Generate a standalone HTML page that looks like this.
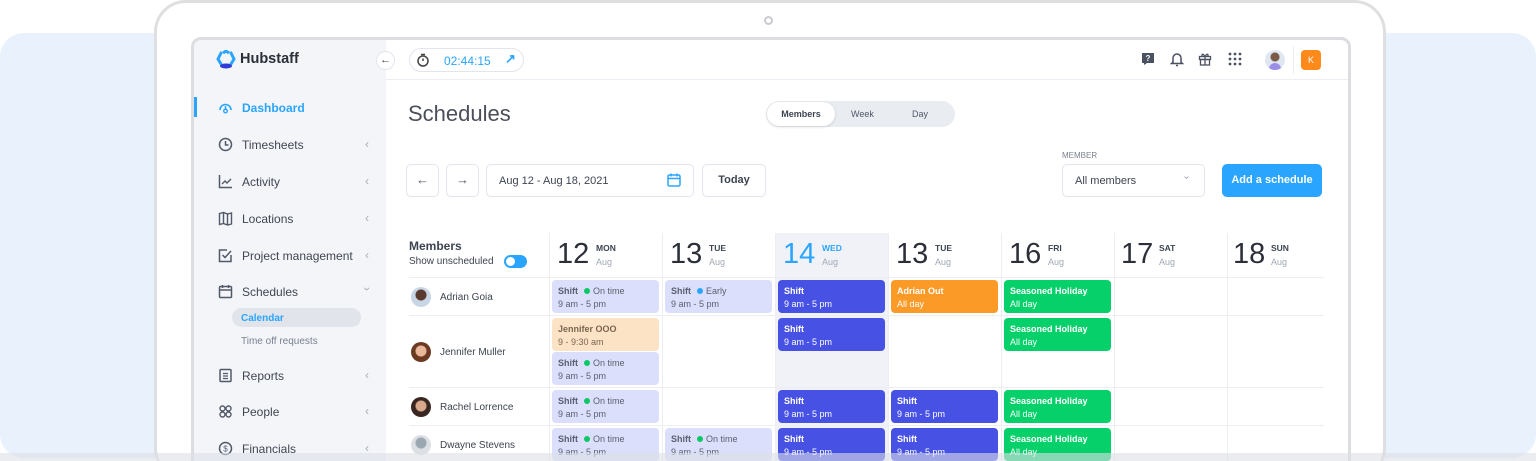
<!DOCTYPE html>
<html><head><meta charset="utf-8">
<style>
*{box-sizing:border-box;margin:0;padding:0}
html,body{width:1536px;height:461px;overflow:hidden;background:#fff}
body{font-family:"Liberation Sans",sans-serif;color:#3d4451}
#w{position:relative;width:1536px;height:461px;overflow:hidden}
.a{position:absolute;white-space:nowrap}
.nav{position:absolute;left:218px;font-size:12px;color:#404652;display:flex;align-items:center;gap:9px;white-space:nowrap}
.nav svg{width:15px;height:15px}
.chev{position:absolute;left:365px;color:#a4abb7;font-size:12px}
.col{position:absolute;top:233px;width:113px;height:240px;border-left:1px solid #eceef3}
.dn{position:absolute;top:238px;font-size:29px;color:#2b2f38}
.dd{position:absolute;top:243px;font-size:8.5px;font-weight:bold;color:#3d4451}
.dm{position:absolute;top:257px;font-size:9px;color:#a1a8b5}
.ev{position:absolute;width:107px;height:33px;border-radius:4px;padding:5px 6px;font-size:9px;line-height:13px;white-space:nowrap;overflow:hidden}
.ev b{font-weight:bold}
.lv{background:#dcdffb;color:#5a6070}
.bl{background:#4752e4;color:#fff}
.or{background:#fc9a27;color:#fff}
.gr{background:#05d06a;color:#fff}
.pe{background:#fde3c6;color:#7a6552}
.dot{display:inline-block;width:6px;height:6px;border-radius:50%;margin:0 3px 0 6px;vertical-align:0}
.hl{position:absolute;left:409px;height:1px;width:915px;background:#eceef3}
.mem{position:absolute;left:411px;font-size:10px;color:#3d4451;display:flex;align-items:center;gap:9px;white-space:nowrap}
.av{width:20px;height:20px;border-radius:50%}
.btn{position:absolute;border:1px solid #e1e5ee;border-radius:5px;background:#fff;white-space:nowrap}
</style></head><body><div id="w">
<div class="a" style="left:0;top:33px;width:1536px;height:425px;background:#e8f1fc;border-radius:24px"></div>
<div class="a" style="left:154px;top:0;width:1232px;height:480px;background:#fff;border:3px solid #dedfe1;border-radius:32px"></div>
<div class="a" style="left:764px;top:16px;width:9px;height:9px;border-radius:50%;border:2px solid #c9cbcf"></div>
<div class="a" style="left:191px;top:37px;width:1160px;height:440px;background:#fff;border:3px solid #dcdde0;border-radius:10px;overflow:hidden">
 <div class="a" style="left:0;top:0;width:192px;height:440px;background:#f3f5f9"></div>
 <div class="a" style="left:192px;top:39px;width:970px;height:1px;background:#eceef3"></div>
</div>
<svg class="a" style="left:216px;top:50px" width="20" height="19" viewBox="0 0 20 19"><path d="M5 3 L2 9 L5 14" stroke="#2aa5ff" stroke-width="3" fill="none" stroke-linecap="round"/><path d="M15 3 L18 9 L15 14" stroke="#2aa5ff" stroke-width="3" fill="none" stroke-linecap="round"/><path d="M7 3 L10 1 L13 3" stroke="#2aa5ff" stroke-width="3" fill="none"/><ellipse cx="10" cy="16" rx="6" ry="2.5" fill="#2f3bd8"/></svg>
<div class="a" style="left:240px;top:51px;font-size:14.5px;font-weight:bold;color:#2b2f38">Hubstaff</div>
<div class="a" style="left:376px;top:51px;width:19px;height:19px;border-radius:50%;background:#fff;border:1px solid #e1e5ee;font-size:11px;text-align:center;line-height:17px;color:#444">&#8592;</div>
<div class="a" style="left:409px;top:48px;width:115px;height:24px;border-radius:12px;border:1px solid #e1e5ee;background:#fff"></div>
<svg class="a" style="left:416px;top:53px" width="14" height="14" viewBox="0 0 14 14"><circle cx="7" cy="8" r="5" stroke="#444" stroke-width="1.5" fill="none"/><path d="M5 1.5h4M7 8V5.5" stroke="#444" stroke-width="1.5"/></svg>
<div class="a" style="left:444px;top:54px;font-size:12px;color:#2aa5ff">02:44:15</div>
<div class="a" style="left:505px;top:51px;font-size:13px;color:#2aa5ff;font-weight:bold">&#8599;</div>
<svg class="a" style="left:1141px;top:52px" width="14" height="14" viewBox="0 0 14 14"><path d="M1 1h12v10H6l-3 2v-2H1z" fill="#4a5161"/><text x="7" y="9" font-size="8" fill="#fff" text-anchor="middle" font-family="Liberation Sans" font-weight="bold">?</text></svg>
<svg class="a" style="left:1170px;top:52px" width="14" height="15" viewBox="0 0 14 15"><path d="M3 10V6a4 4 0 0 1 8 0v4l1.5 1.5h-11z" stroke="#4a5161" stroke-width="1.5" fill="none"/><path d="M6 13.5h2" stroke="#4a5161" stroke-width="1.5"/></svg>
<svg class="a" style="left:1198px;top:52px" width="14" height="14" viewBox="0 0 14 14"><rect x="1.5" y="4.5" width="11" height="3" stroke="#4a5161" stroke-width="1.3" fill="none"/><rect x="2.5" y="7.5" width="9" height="5.5" stroke="#4a5161" stroke-width="1.3" fill="none"/><path d="M7 4.5v8.5M7 4.5C5 1 3 2 4.5 4.5M7 4.5C9 1 11 2 9.5 4.5" stroke="#4a5161" stroke-width="1.3" fill="none"/></svg>
<svg class="a" style="left:1228px;top:52px" width="14" height="14" viewBox="0 0 14 14" fill="#4a5161"><circle cx="2" cy="2" r="1.4"/><circle cx="7" cy="2" r="1.4"/><circle cx="12" cy="2" r="1.4"/><circle cx="2" cy="7" r="1.4"/><circle cx="7" cy="7" r="1.4"/><circle cx="12" cy="7" r="1.4"/><circle cx="2" cy="12" r="1.4"/><circle cx="7" cy="12" r="1.4"/><circle cx="12" cy="12" r="1.4"/></svg>
<div class="a" style="left:1265px;top:50px;width:20px;height:20px;border-radius:50%;background:radial-gradient(circle at 50% 35%,#7a5a48 0 4px,#dfe8f2 5px);overflow:hidden"><div style="position:absolute;left:4px;top:13px;width:12px;height:8px;border-radius:6px 6px 0 0;background:#9b8ee8"></div></div>
<div class="a" style="left:1293px;top:46px;width:1px;height:28px;background:#eceef3"></div>
<div class="a" style="left:1301px;top:50px;width:20px;height:20px;border-radius:4px;background:#fd8a1a;color:#fff;font-size:9px;text-align:center;line-height:20px">K</div>

<div class="a" style="left:194px;top:97px;width:3px;height:20px;background:#2aa5ff"></div>
<div class="nav" style="top:100px;color:#2aa5ff;font-weight:bold"><svg viewBox="0 0 15 15"><path d="M2 10a5.5 5.5 0 0 1 11 0" stroke="#2aa5ff" stroke-width="1.6" fill="none"/><circle cx="7.5" cy="11" r="1.8" stroke="#2aa5ff" stroke-width="1.4" fill="none"/><path d="M7.5 9V6" stroke="#2aa5ff" stroke-width="1.5"/></svg>Dashboard</div>
<div class="nav" style="top:137px"><svg viewBox="0 0 15 15"><circle cx="7.5" cy="7.5" r="6" stroke="#525a69" stroke-width="1.5" fill="none"/><path d="M7.5 4v4h3" stroke="#525a69" stroke-width="1.5" fill="none"/></svg>Timesheets</div><div class="chev" style="top:137px">&#8249;</div>
<div class="nav" style="top:174px"><svg viewBox="0 0 15 15"><path d="M1.5 1v12.5H14" stroke="#525a69" stroke-width="1.5" fill="none"/><path d="M4 10l3-3 2 2 4-4" stroke="#525a69" stroke-width="1.4" fill="none"/></svg>Activity</div><div class="chev" style="top:174px">&#8249;</div>
<div class="nav" style="top:211px"><svg viewBox="0 0 15 15"><path d="M1.5 2.5l4-1 4 1.5 4-1v11l-4 1-4-1.5-4 1z M5.5 1.5v11 M9.5 3v11" stroke="#525a69" stroke-width="1.4" fill="none"/></svg>Locations</div><div class="chev" style="top:211px">&#8249;</div>
<div class="nav" style="top:248px"><svg viewBox="0 0 15 15"><path d="M13 7v6.5H1.5V2H9" stroke="#525a69" stroke-width="1.5" fill="none"/><path d="M4.5 7l2.5 2.5 6-6.5" stroke="#525a69" stroke-width="1.5" fill="none"/></svg>Project management</div><div class="chev" style="top:248px">&#8249;</div>
<div class="nav" style="top:284px"><svg viewBox="0 0 15 15"><rect x="1.5" y="2.5" width="12" height="11" rx="1" stroke="#525a69" stroke-width="1.5" fill="none"/><path d="M1.5 6h12M4.5 1v3M10.5 1v3" stroke="#525a69" stroke-width="1.5"/></svg>Schedules</div><div class="chev" style="top:282px;left:364px;transform:rotate(-90deg)">&#8249;</div>
<div class="a" style="left:232px;top:308px;width:129px;height:19px;border-radius:10px;background:#e1e4ea"></div>
<div class="a" style="left:241px;top:313px;font-size:10px;color:#2aa5ff;font-weight:bold">Calendar</div>
<div class="a" style="left:241px;top:336px;font-size:10px;color:#7a818f">Time off requests</div>
<div class="nav" style="top:368px"><svg viewBox="0 0 15 15"><rect x="2" y="1.5" width="11" height="12" rx="1" stroke="#525a69" stroke-width="1.5" fill="none"/><path d="M5 5.5h5M5 8h5M5 10.5h5" stroke="#525a69" stroke-width="1.3"/></svg>Reports</div><div class="chev" style="top:368px">&#8249;</div>
<div class="nav" style="top:404px"><svg viewBox="0 0 15 15"><circle cx="4.5" cy="4.5" r="2.5" stroke="#525a69" stroke-width="1.4" fill="none"/><circle cx="10.5" cy="4.5" r="2.5" stroke="#525a69" stroke-width="1.4" fill="none"/><circle cx="4.5" cy="10.5" r="2.5" stroke="#525a69" stroke-width="1.4" fill="none"/><circle cx="10.5" cy="10.5" r="2.5" stroke="#525a69" stroke-width="1.4" fill="none"/></svg>People</div><div class="chev" style="top:404px">&#8249;</div>
<div class="nav" style="top:441px"><svg viewBox="0 0 15 15"><circle cx="7.5" cy="7.5" r="6" stroke="#525a69" stroke-width="1.5" fill="none"/><text x="7.5" y="10.5" font-size="8" fill="#525a69" text-anchor="middle" font-family="Liberation Sans">$</text></svg>Financials</div><div class="chev" style="top:441px">&#8249;</div>

<div class="a" style="left:408px;top:101px;font-size:22px;color:#4a4f5a">Schedules</div>
<div class="a" style="left:766px;top:101px;width:189px;height:26px;border-radius:13px;background:#e9ecf1"></div>
<div class="a" style="left:767px;top:102px;width:68px;height:24px;border-radius:12px;background:#fff;box-shadow:0 1px 3px rgba(0,0,0,.12);font-size:9px;font-weight:bold;text-align:center;line-height:24px;color:#3d4451">Members</div>
<div class="a" style="left:851px;top:109px;font-size:9px;color:#50576a">Week</div>
<div class="a" style="left:912px;top:109px;font-size:9px;color:#50576a">Day</div>

<div class="btn" style="left:406px;top:164px;width:33px;height:33px"></div><div class="a" style="left:416px;top:172px;font-size:13px;color:#525a69">&#8592;</div>
<div class="btn" style="left:446px;top:164px;width:33px;height:33px"></div><div class="a" style="left:456px;top:172px;font-size:13px;color:#525a69">&#8594;</div>
<div class="btn" style="left:486px;top:164px;width:208px;height:33px"></div>
<div class="a" style="left:499px;top:175px;font-size:11px;color:#3d4451">Aug 12 - Aug 18, 2021</div>
<svg class="a" style="left:667px;top:173px" width="14" height="14" viewBox="0 0 14 14"><rect x="1" y="2" width="12" height="11" rx="1.5" stroke="#2aa5ff" stroke-width="1.5" fill="none"/><path d="M1 5.5h12M4 0.5v3M10 0.5v3" stroke="#2aa5ff" stroke-width="1.5"/></svg>
<div class="btn" style="left:702px;top:164px;width:64px;height:33px;font-size:11px;font-weight:bold;text-align:center;line-height:31px;color:#3d4451">Today</div>
<div class="a" style="left:1062px;top:151px;font-size:8px;color:#7a818f">MEMBER</div>
<div class="btn" style="left:1062px;top:164px;width:143px;height:33px"></div>
<div class="a" style="left:1075px;top:175px;font-size:11px;color:#3d4451">All members</div>
<div class="a" style="left:1185px;top:172px;font-size:10px;color:#8a91a0;transform:rotate(-90deg)">&#8249;</div>
<div class="a" style="left:1222px;top:164px;width:100px;height:33px;border-radius:5px;background:#2aa5ff;color:#fff;font-size:11px;font-weight:bold;text-align:center;line-height:33px">Add a schedule</div>

<div class="a" style="left:776px;top:233px;width:112px;height:240px;background:#f0f2f7"></div>
<div class="col" style="left:549px"></div><div class="col" style="left:662px"></div><div class="col" style="left:775px"></div><div class="col" style="left:888px"></div><div class="col" style="left:1001px"></div><div class="col" style="left:1114px"></div><div class="col" style="left:1227px"></div>
<div class="hl" style="top:277px"></div><div class="hl" style="top:315px"></div><div class="hl" style="top:387px"></div><div class="hl" style="top:425px"></div>

<div class="a" style="left:409px;top:239px;font-size:12px;font-weight:bold;color:#3d4451">Members</div>
<div class="a" style="left:409px;top:256px;font-size:10px;color:#3d4451">Show unscheduled</div>
<div class="a" style="left:504px;top:255px;width:23px;height:13px;border-radius:7px;background:#2aa5ff"><div style="position:absolute;left:2px;top:2px;width:9px;height:9px;border-radius:50%;background:#fff"></div></div>

<div class="dn" style="left:557px">12</div><div class="dd" style="left:596px">MON</div><div class="dm" style="left:596px">Aug</div>
<div class="dn" style="left:670px">13</div><div class="dd" style="left:709px">TUE</div><div class="dm" style="left:709px">Aug</div>
<div class="dn" style="left:783px;color:#2aa5ff">14</div><div class="dd" style="left:822px;color:#2aa5ff">WED</div><div class="dm" style="left:822px">Aug</div>
<div class="dn" style="left:896px">13</div><div class="dd" style="left:935px">TUE</div><div class="dm" style="left:935px">Aug</div>
<div class="dn" style="left:1009px">16</div><div class="dd" style="left:1048px">FRI</div><div class="dm" style="left:1048px">Aug</div>
<div class="dn" style="left:1121px">17</div><div class="dd" style="left:1159px">SAT</div><div class="dm" style="left:1159px">Aug</div>
<div class="dn" style="left:1233px">18</div><div class="dd" style="left:1271px">SUN</div><div class="dm" style="left:1271px">Aug</div>

<div class="mem" style="top:287px"><div class="av" style="background:radial-gradient(circle at 50% 40%,#5a3a2c 0 5px,#c9d6e6 6px)"></div>Adrian Goia</div>
<div class="mem" style="top:342px"><div class="av" style="background:radial-gradient(circle at 50% 45%,#e9b89a 0 5px,#6b3a22 6px)"></div>Jennifer Muller</div>
<div class="mem" style="top:397px"><div class="av" style="background:radial-gradient(circle at 50% 45%,#d9a98c 0 5px,#3a2620 6px)"></div>Rachel Lorrence</div>
<div class="mem" style="top:435px"><div class="av" style="background:radial-gradient(circle at 50% 40%,#9aa6b0 0 5px,#dcdfe3 6px)"></div>Dwayne Stevens</div>

<div class="ev lv" style="left:552px;top:280px"><b>Shift</b><span class="dot" style="background:#0bc866"></span>On time<br>9 am - 5 pm</div>
<div class="ev lv" style="left:665px;top:280px"><b>Shift</b><span class="dot" style="background:#2aa5ff"></span>Early<br>9 am - 5 pm</div>
<div class="ev bl" style="left:778px;top:280px"><b>Shift</b><br>9 am - 5 pm</div>
<div class="ev or" style="left:891px;top:280px"><b>Adrian Out</b><br>All day</div>
<div class="ev gr" style="left:1004px;top:280px"><b>Seasoned Holiday</b><br>All day</div>

<div class="ev pe" style="left:552px;top:318px"><b>Jennifer OOO</b><br>9 - 9:30 am</div>
<div class="ev lv" style="left:552px;top:352px"><b>Shift</b><span class="dot" style="background:#0bc866"></span>On time<br>9 am - 5 pm</div>
<div class="ev bl" style="left:778px;top:318px"><b>Shift</b><br>9 am - 5 pm</div>
<div class="ev gr" style="left:1004px;top:318px"><b>Seasoned Holiday</b><br>All day</div>

<div class="ev lv" style="left:552px;top:390px"><b>Shift</b><span class="dot" style="background:#0bc866"></span>On time<br>9 am - 5 pm</div>
<div class="ev bl" style="left:778px;top:390px"><b>Shift</b><br>9 am - 5 pm</div>
<div class="ev bl" style="left:891px;top:390px"><b>Shift</b><br>9 am - 5 pm</div>
<div class="ev gr" style="left:1004px;top:390px"><b>Seasoned Holiday</b><br>All day</div>

<div class="ev lv" style="left:552px;top:428px"><b>Shift</b><span class="dot" style="background:#0bc866"></span>On time<br>9 am - 5 pm</div>
<div class="ev lv" style="left:665px;top:428px"><b>Shift</b><span class="dot" style="background:#0bc866"></span>On time<br>9 am - 5 pm</div>
<div class="ev bl" style="left:778px;top:428px"><b>Shift</b><br>9 am - 5 pm</div>
<div class="ev bl" style="left:891px;top:428px"><b>Shift</b><br>9 am - 5 pm</div>
<div class="ev gr" style="left:1004px;top:428px"><b>Seasoned Holiday</b><br>All day</div>

<div class="a" style="left:0;top:453px;width:1536px;height:8px;background:rgba(220,224,230,.6)"></div>
</div></body></html>
